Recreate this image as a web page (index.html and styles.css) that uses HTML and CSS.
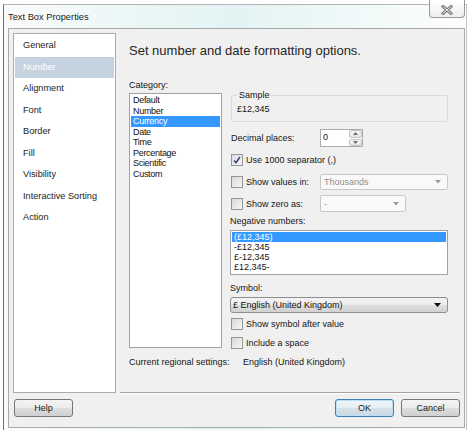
FILE: index.html
```html
<!DOCTYPE html>
<html>
<head>
<meta charset="utf-8">
<link rel="stylesheet" href="styles.css">
</head>
<body>
<div class="window">
  <div class="titlebar">
    <span class="title">Text Box Properties</span>
    <div class="close">
      <svg width="12" height="10" viewBox="0 0 12 10">
        <path d="M2 1.5 L10 8.5 M10 1.5 L2 8.5" stroke="#7d7d7d" stroke-width="3" stroke-linecap="square"/>
        <path d="M2 1.5 L10 8.5 M10 1.5 L2 8.5" stroke="#e8e8e8" stroke-width="1" stroke-linecap="square"/>
      </svg>
    </div>
  </div>
  <div class="client">
    <div class="nav">
      <div class="nav-item">General</div>
      <div class="nav-item selected">Number</div>
      <div class="nav-item">Alignment</div>
      <div class="nav-item">Font</div>
      <div class="nav-item">Border</div>
      <div class="nav-item">Fill</div>
      <div class="nav-item">Visibility</div>
      <div class="nav-item">Interactive Sorting</div>
      <div class="nav-item">Action</div>
    </div>
    <div class="main">
      <div class="heading">Set number and date formatting options.</div>
      <div class="cols">
        <div class="catcol">
          <div class="lbl-line">Category:</div>
          <div class="catlist">
            <div class="li">Default</div>
            <div class="li">Number</div>
            <div class="li sel">Currency</div>
            <div class="li">Date</div>
            <div class="li">Time</div>
            <div class="li">Percentage</div>
            <div class="li">Scientific</div>
            <div class="li">Custom</div>
          </div>
        </div>
        <div class="rightcol">
          <fieldset class="sample">
            <legend>Sample</legend>
            <div class="sample-val">£12,345</div>
          </fieldset>
          <div class="row r-decimal">
            <div class="lbl">Decimal places:</div>
            <div class="spin">
              <div class="spin-val">0</div>
              <div class="spin-btns">
                <div class="spin-btn"><svg width="5" height="3" viewBox="0 0 5 3"><path d="M0 3 L2.5 0 L5 3Z" fill="#6d6d6d"/></svg></div>
                <div class="spin-btn"><svg width="5" height="3" viewBox="0 0 5 3"><path d="M0 0 L2.5 3 L5 0Z" fill="#6d6d6d"/></svg></div>
              </div>
            </div>
          </div>
          <div class="row r-sep">
            <div class="cb checked"><svg width="10" height="10" viewBox="0 0 10 10"><path d="M2 5.5 L4 7.8 L8 2" fill="none" stroke="#3b4a66" stroke-width="1.5"/></svg></div>
            <span>Use 1000 separator (,)</span>
          </div>
          <div class="row r-values">
            <div class="lbl cblbl"><div class="cb"></div><span>Show values in:</span></div>
            <div class="dd dd-dis dd-wide"><span>Thousands</span><svg width="6" height="4" viewBox="0 0 6 4"><path d="M0 0 L3 3.5 L6 0Z" fill="#9a9a9a"/></svg></div>
          </div>
          <div class="row r-zero">
            <div class="lbl cblbl"><div class="cb"></div><span>Show zero as:</span></div>
            <div class="dd dd-dis dd-short"><span>-</span><svg width="6" height="4" viewBox="0 0 6 4"><path d="M0 0 L3 3.5 L6 0Z" fill="#9a9a9a"/></svg></div>
          </div>
          <div class="lbl-line neg-label">Negative numbers:</div>
          <div class="neglist">
            <div class="nli sel">(£12,345)</div>
            <div class="nli">-£12,345</div>
            <div class="nli">£-12,345</div>
            <div class="nli">£12,345-</div>
          </div>
          <div class="lbl-line sym-label">Symbol:</div>
          <div class="dd dd-sym"><span>£ English (United Kingdom)</span><svg width="7" height="4" viewBox="0 0 7 4"><path d="M0 0 L3.5 4 L7 0Z" fill="#111"/></svg></div>
          <div class="row r-after">
            <div class="cb"></div><span>Show symbol after value</span>
          </div>
          <div class="row r-space">
            <div class="cb"></div><span>Include a space</span>
          </div>
        </div>
      </div>
      <div class="regional">
        <span class="reg-lbl">Current regional settings:</span>
        <span>English (United Kingdom)</span>
      </div>
    </div>
    <div class="buttons">
      <div class="btn">Help</div>
      <div class="spacer"></div>
      <div class="btn btn-ok">OK</div>
      <div class="btn">Cancel</div>
    </div>
  </div>
</div>
</body>
</html>
```

FILE: styles.css
```css
html, body {
  margin: 0;
  padding: 0;
}
body {
  width: 474px;
  height: 430px;
  overflow: hidden;
  background: #ffffff;
  font-family: "Liberation Sans", Arial, sans-serif;
  font-size: 9px;
  color: #151515;
}
.window {
  box-sizing: border-box;
  margin: 4px 0 0 3px;
  width: 464px;
  height: 426px;
  border-top: 1px solid #b4b4b4;
  border-left: 1px solid #6e6e6e;
  border-right: 1px solid #c4c4c4;
  background: linear-gradient(90deg, #fbfbfb 0%, #ecf7f7 25%, #e3f3f3 50%, #eef8f8 72%, #fdfdfd 100%);
  display: flex;
  flex-direction: column;
}
.titlebar {
  height: 23px;
  display: flex;
  align-items: center;
  justify-content: space-between;
  padding-left: 4px;
  flex: none;
}
.title {
  font-size: 9.3px;
  color: #1a1a1a;
  margin-top: 1px;
}
.close {
  align-self: flex-start;
  margin-top: -5px;
  margin-right: 1px;
  width: 36px;
  height: 18px;
  box-sizing: border-box;
  border: 1px solid #9a9a9a;
  border-top: none;
  border-radius: 0 0 4px 4px;
  background: linear-gradient(#ffffff, #eeeeee);
  display: flex;
  align-items: center;
  justify-content: center;
  padding-top: 2px;
}
.client {
  flex: 1;
  margin: 0 1px 2px 4px;
  border: 1px solid #a9a9a9;
  background: #f0f0f0;
  padding: 4px;
  display: grid;
  grid-template-columns: 103px 1fr;
  grid-template-rows: 360px auto;
  column-gap: 4px;
}
.nav {
  box-sizing: border-box;
  border: 1px solid #ababab;
  background: #ffffff;
  padding-top: 1px;
}
.nav-item {
  height: 21.5px;
  line-height: 21.5px;
  padding-left: 9px;
  font-size: 9.2px;
  color: #1c1c1c;
}
.nav-item.selected {
  margin: 0 1px;
  padding-left: 8px;
  background: #c5d3e0;
  color: #ffffff;
}
.main {
  border-bottom: 1px solid #a3a3a3;
  box-shadow: 0 1px 0 #ffffff;
  padding-left: 9px;
  display: flex;
  flex-direction: column;
}
.heading {
  font-size: 13px;
  line-height: 16px;
  margin-top: 10px;
  color: #262626;
}
.cols {
  display: flex;
  gap: 8px;
  margin-top: 21px;
}
.catcol {
  width: 93px;
  display: flex;
  flex-direction: column;
}
.lbl-line {
  line-height: 11px;
  height: 11px;
}
.catlist {
  margin-top: 2px;
  height: 255px;
  box-sizing: border-box;
  border: 1px solid #a2a2a2;
  background: #ffffff;
  padding: 1px;
}
.li {
  height: 10.5px;
  line-height: 10.5px;
  padding-left: 2px;
  letter-spacing: -0.3px;
  color: #111;
}
.li.sel, .nli.sel {
  background: #3399ff;
  color: #ffffff;
}
.rightcol {
  width: 218px;
  display: flex;
  flex-direction: column;
}
.sample {
  margin: 10px 0 0 1px;
  padding: 0 0 6px 5px;
  border: 1px solid #dadada;
  border-radius: 2px;
  min-width: 0;
}
.sample legend {
  padding: 0 2px;
  line-height: 11px;
  font-size: 9px;
}
.sample-val {
  margin-top: 3px;
  line-height: 11px;
}
.row {
  display: flex;
  align-items: center;
}
.lbl {
  width: 90px;
  box-sizing: border-box;
  padding-left: 1px;
  flex: none;
}
.cblbl {
  display: flex;
  align-items: center;
}
.r-decimal { margin-top: 7px; height: 18px; }
.r-sep { margin-top: 7px; height: 12px; padding-left: 1px; }
.r-values { margin-top: 8px; height: 16px; }
.r-zero { margin-top: 5px; height: 17px; }
.r-after { margin-top: 5px; height: 12px; padding-left: 1px; }
.r-space { margin-top: 7px; height: 12px; padding-left: 1px; }
.spin {
  width: 43px;
  height: 18px;
  box-sizing: border-box;
  border: 1px solid #abadb3;
  background: #ffffff;
  display: flex;
}
.spin-val {
  flex: 1;
  padding-left: 2px;
  line-height: 15px;
}
.spin-btns {
  width: 13px;
  display: flex;
  flex-direction: column;
  gap: 1px;
}
.spin-btn {
  flex: 1;
  box-sizing: border-box;
  border: 1px solid #c3c3c3;
  border-radius: 2px;
  background: linear-gradient(#f6f6f6, #e4e4e4);
  display: flex;
  align-items: center;
  justify-content: center;
}
.cb {
  width: 12px;
  height: 12px;
  box-sizing: border-box;
  border: 1px solid #969696;
  background: linear-gradient(135deg, #d8d8d8, #f7f7f7);
  margin-right: 3px;
  flex: none;
  display: flex;
  align-items: center;
  justify-content: center;
}
.cb.checked {
  background: linear-gradient(135deg, #d9dde4, #f6f7fa);
}
.dd {
  box-sizing: border-box;
  display: flex;
  align-items: center;
  justify-content: space-between;
  padding: 0 6px 0 3px;
}
.dd-dis {
  border: 1px solid #c8c8c8;
  border-radius: 2px;
  background: #f9f9f9;
  color: #8e8e8e;
}
.dd-wide { width: 128px; height: 16px; }
.dd-short { width: 86px; height: 17px; }
.neg-label { margin-top: 4px; }
.neglist {
  margin-top: 3px;
  height: 42px;
  border: 1px solid #a2a2a2;
  background: #ffffff;
  padding: 1px 1px 0 1px;
  overflow: hidden;
}
.nli {
  height: 10px;
  line-height: 10px;
  padding-left: 2px;
}
.sym-label { margin-top: 8px; }
.dd-sym {
  margin-top: 2.5px;
  width: 218px;
  height: 16px;
  border: 1px solid #8e8e8e;
  border-radius: 3px;
  background: linear-gradient(#f3f3f3 0%, #ececec 50%, #dedede 51%, #d2d2d2 100%);
  color: #111;
  padding: 0 6px 0 2px;
}
.regional {
  margin-top: 8.5px;
  line-height: 11px;
  display: flex;
}
.reg-lbl {
  width: 114px;
  flex: none;
}
.buttons {
  grid-column: 1 / -1;
  display: flex;
  gap: 7px;
  margin-top: 6px;
  padding-left: 1px;
}
.spacer {
  flex: 1;
}
.btn {
  width: 59px;
  height: 18px;
  box-sizing: border-box;
  border: 1px solid #767676;
  border-radius: 3px;
  background: linear-gradient(#f3f3f3 0%, #ebebeb 50%, #dddddd 51%, #d0d0d0 100%);
  display: flex;
  align-items: center;
  justify-content: center;
  color: #1a1a1a;
}
.btn-ok {
  border-color: #3c7fb1;
  box-shadow: inset 0 0 0 1px #b9e0f5;
  background: linear-gradient(#f0f5f8 0%, #e6eef3 50%, #d6e2ea 51%, #cdd9e2 100%);
}
```
